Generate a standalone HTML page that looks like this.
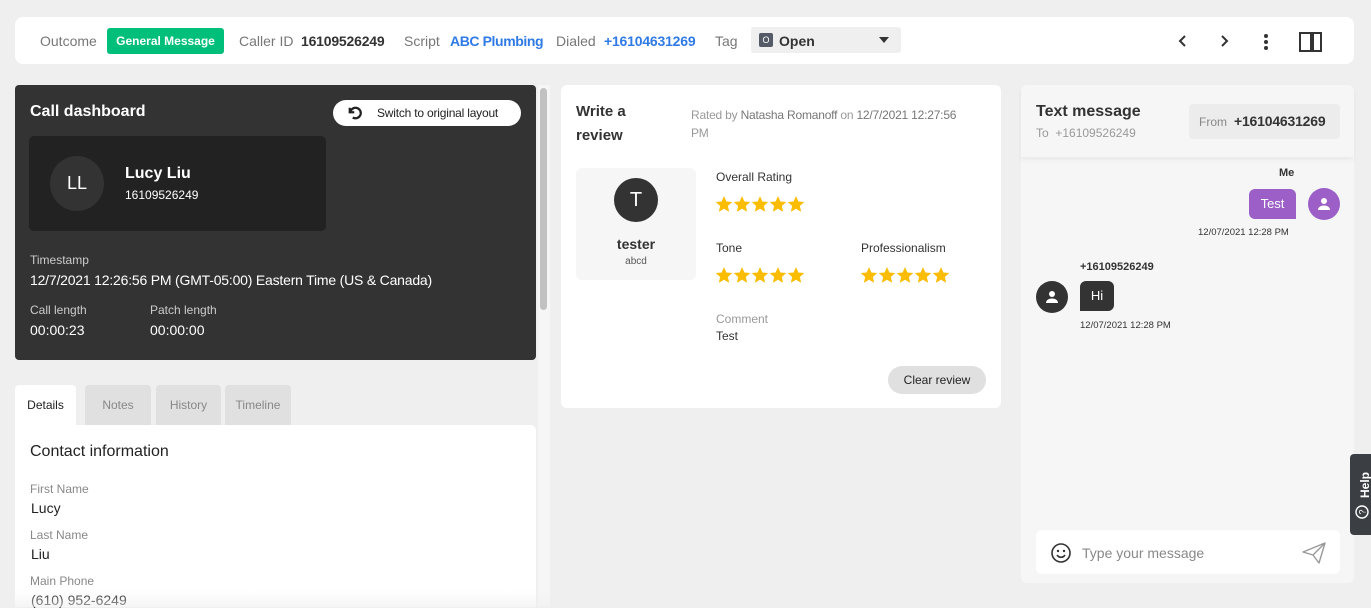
<!DOCTYPE html>
<html><head><meta charset="utf-8"><style>
*{box-sizing:border-box;margin:0;padding:0}
body{width:1371px;height:607px;background:#efefef;font-family:"Liberation Sans",sans-serif;position:relative;overflow:hidden;color:#333}
.a{position:absolute;white-space:nowrap}
.g{color:#777}
</style></head><body>
<!-- top bar -->
<div class="a" style="left:15px;top:17px;width:1339px;height:47px;background:#fff;border-radius:8px"></div>
<div class="a g" style="left:40px;top:33px;font-size:14px">Outcome</div>
<div class="a" style="left:107px;top:28px;width:117px;height:26px;background:#00bf7a;border-radius:3px;color:#fff;font-size:12px;font-weight:bold;text-align:center;line-height:26px">General Message</div>
<div class="a g" style="left:239px;top:33px;font-size:14px">Caller ID</div>
<div class="a" style="left:301px;top:33px;font-size:14px;font-weight:bold;letter-spacing:-0.2px">16109526249</div>
<div class="a g" style="left:404px;top:33px;font-size:14px">Script</div>
<div class="a" style="left:450px;top:33px;font-size:14px;font-weight:bold;color:#2f7ae5;letter-spacing:-0.4px">ABC Plumbing</div>
<div class="a g" style="left:556px;top:33px;font-size:14px">Dialed</div>
<div class="a" style="left:604px;top:33px;font-size:14px;font-weight:bold;color:#2f7ae5;letter-spacing:-0.2px">+16104631269</div>
<div class="a g" style="left:715px;top:33px;font-size:14px">Tag</div>
<div class="a" style="left:751px;top:27px;width:150px;height:26px;background:#efefef;border-radius:3px"></div>
<div class="a" style="left:759px;top:33px;width:14px;height:14px;background:#555b66;border-radius:2px;color:#fff;font-size:9px;text-align:center;line-height:14px">O</div>
<div class="a" style="left:779px;top:33px;font-size:14px;font-weight:bold">Open</div>
<div class="a" style="left:879px;top:37px;border-left:5px solid transparent;border-right:5px solid transparent;border-top:6px solid #333"></div>
<svg class="a" style="left:1176px;top:33px" width="14" height="16" viewBox="0 0 14 16"><path d="M9 3L4 8l5 5" fill="none" stroke="#333" stroke-width="2"/></svg>
<svg class="a" style="left:1217px;top:33px" width="14" height="16" viewBox="0 0 14 16"><path d="M5 3l5 5-5 5" fill="none" stroke="#333" stroke-width="2"/></svg>
<svg class="a" style="left:1262px;top:33px" width="8" height="18"><circle cx="4" cy="3" r="2" fill="#333"/><circle cx="4" cy="9" r="2" fill="#333"/><circle cx="4" cy="15" r="2" fill="#333"/></svg>
<svg class="a" style="left:1299px;top:32px" width="24" height="20"><rect x="1" y="1" width="11" height="18" fill="none" stroke="#333" stroke-width="2"/><rect x="14" y="1" width="8" height="18" fill="none" stroke="#333" stroke-width="2"/></svg>

<!-- dark card -->
<div class="a" style="left:15px;top:85px;width:521px;height:275px;background:#333;border-radius:4px"></div>
<div class="a" style="left:30px;top:103px;font-size:16px;color:#fff;font-weight:bold">Call dashboard</div>
<div class="a" style="left:333px;top:100px;width:188px;height:26px;background:#fff;border-radius:13px"></div>
<svg class="a" style="left:346px;top:104px" width="18" height="18" viewBox="0 0 24 24"><path d="M5 5v6h6" fill="none" stroke="#222" stroke-width="3"/><path d="M6 10a7 7 0 1 1 3 8" fill="none" stroke="#222" stroke-width="3"/></svg>
<div class="a" style="left:377px;top:106px;font-size:12px;color:#222;letter-spacing:-0.2px">Switch to original layout</div>
<div class="a" style="left:29px;top:136px;width:297px;height:95px;background:#222;border-radius:5px"></div>
<div class="a" style="left:50px;top:156px;width:54px;height:55px;background:#333;border-radius:50%;color:#fff;font-size:18px;text-align:center;line-height:55px">LL</div>
<div class="a" style="left:125px;top:165px;font-size:16px;color:#fff;font-weight:bold">Lucy Liu</div>
<div class="a" style="left:125px;top:188px;font-size:12px;color:#fff">16109526249</div>
<div class="a" style="left:30px;top:253px;font-size:12px;color:#ccc">Timestamp</div>
<div class="a" style="left:30px;top:272px;font-size:14px;color:#fff;letter-spacing:-0.2px">12/7/2021 12:26:56 PM (GMT-05:00) Eastern Time (US &amp; Canada)</div>
<div class="a" style="left:30px;top:303px;font-size:12px;color:#ccc">Call length</div>
<div class="a" style="left:30px;top:322px;font-size:14px;color:#fff">00:00:23</div>
<div class="a" style="left:150px;top:303px;font-size:12px;color:#ccc">Patch length</div>
<div class="a" style="left:150px;top:322px;font-size:14px;color:#fff">00:00:00</div>
<!-- scrollbar -->
<div class="a" style="left:538px;top:85px;width:12px;height:522px;background:#f6f6f6"></div>
<div class="a" style="left:540px;top:88px;width:7px;height:222px;background:#c1c1c1;border-radius:4px"></div>

<!-- tabs -->
<div class="a" style="left:15px;top:385px;width:61px;height:45px;background:#fff;border-radius:4px 4px 0 0;font-size:12px;text-align:center;line-height:40px;color:#222">Details</div>
<div class="a" style="left:85px;top:385px;width:66px;height:40px;background:#e0e0e0;border-radius:4px 4px 0 0;font-size:12px;text-align:center;line-height:40px;color:#888">Notes</div>
<div class="a" style="left:156px;top:385px;width:65px;height:40px;background:#e0e0e0;border-radius:4px 4px 0 0;font-size:12px;text-align:center;line-height:40px;color:#888">History</div>
<div class="a" style="left:225px;top:385px;width:66px;height:40px;background:#e0e0e0;border-radius:4px 4px 0 0;font-size:12px;text-align:center;line-height:40px;color:#888">Timeline</div>
<div class="a" style="left:15px;top:425px;width:521px;height:182px;background:#fff;border-radius:0 5px 0 0"></div>
<div class="a" style="left:30px;top:443px;font-size:16px;color:#222">Contact information</div>
<div class="a" style="left:30px;top:482px;font-size:12px;color:#888">First Name</div>
<div class="a" style="left:31px;top:500px;font-size:14px;color:#222">Lucy</div>
<div class="a" style="left:30px;top:528px;font-size:12px;color:#888">Last Name</div>
<div class="a" style="left:31px;top:546px;font-size:14px;color:#222">Liu</div>
<div class="a" style="left:30px;top:574px;font-size:12px;color:#888">Main Phone</div>
<div class="a" style="left:31px;top:592px;font-size:14px;color:#222">(610) 952-6249</div>
<div class="a" style="left:0;top:590px;width:1371px;height:17px;background:linear-gradient(rgba(239,239,239,0),rgba(239,239,239,.6))"></div>

<!-- review card -->
<div class="a" style="left:561px;top:85px;width:440px;height:323px;background:#fff;border-radius:6px"></div>
<div class="a" style="left:576px;top:100px;font-size:15px;line-height:24px;color:#333;font-weight:bold">Write a<br>review</div>
<div class="a" style="left:691px;top:106px;font-size:12px;line-height:18px;color:#999;letter-spacing:-0.2px">Rated by <span style="color:#777">Natasha Romanoff</span> on <span style="color:#777">12/7/2021 12:27:56</span><br>PM</div>
<div class="a" style="left:576px;top:168px;width:120px;height:112px;background:#f6f6f6;border-radius:6px"></div>
<div class="a" style="left:614px;top:178px;width:44px;height:44px;background:#333;border-radius:50%;color:#fff;font-size:20px;text-align:center;line-height:44px">T</div>
<div class="a" style="left:576px;top:236px;width:120px;text-align:center;font-size:14px;font-weight:bold">tester</div>
<div class="a" style="left:576px;top:256px;width:120px;text-align:center;font-size:10px;color:#555">abcd</div>
<div class="a" style="left:716px;top:170px;font-size:12px;color:#333">Overall Rating</div>
<div class="a" style="left:716px;top:241px;font-size:12px;color:#333">Tone</div>
<div class="a" style="left:861px;top:241px;font-size:12px;color:#333">Professionalism</div>
<svg width="0" height="0" style="position:absolute"><defs><symbol id="s" viewBox="0 0 24 24"><path d="M12 1.5l3.2 7.2 7.8.7-5.9 5.2 1.8 7.7L12 18.3l-6.9 4 1.8-7.7L1 9.4l7.8-.7z" fill="#fbbc04"/></symbol></defs></svg>
<div class="a" style="left:715px;top:195px"><svg width="90" height="18"><use href="#s" x="0" width="18" height="18"/><use href="#s" x="18" width="18" height="18"/><use href="#s" x="36" width="18" height="18"/><use href="#s" x="54" width="18" height="18"/><use href="#s" x="72" width="18" height="18"/></svg></div>
<div class="a" style="left:715px;top:266px"><svg width="90" height="18"><use href="#s" x="0" width="18" height="18"/><use href="#s" x="18" width="18" height="18"/><use href="#s" x="36" width="18" height="18"/><use href="#s" x="54" width="18" height="18"/><use href="#s" x="72" width="18" height="18"/></svg></div>
<div class="a" style="left:860px;top:266px"><svg width="90" height="18"><use href="#s" x="0" width="18" height="18"/><use href="#s" x="18" width="18" height="18"/><use href="#s" x="36" width="18" height="18"/><use href="#s" x="54" width="18" height="18"/><use href="#s" x="72" width="18" height="18"/></svg></div>
<div class="a" style="left:716px;top:312px;font-size:12px;color:#999">Comment</div>
<div class="a" style="left:716px;top:329px;font-size:12px;color:#333">Test</div>
<div class="a" style="left:888px;top:366px;width:98px;height:28px;background:#e0e0e0;border-radius:14px;font-size:12px;text-align:center;line-height:28px;color:#222">Clear review</div>

<!-- text message panel -->
<div class="a" style="left:1021px;top:85px;width:333px;height:498px;background:#f6f6f6;border-radius:6px"></div>
<div class="a" style="left:1021px;top:85px;width:333px;height:72px;background:#f6f6f6;border-radius:6px 6px 0 0;box-shadow:0 3px 5px rgba(0,0,0,.05)"></div>
<div class="a" style="left:1036px;top:103px;font-size:16px;color:#333;font-weight:bold">Text message</div>
<div class="a" style="left:1036px;top:126px;font-size:12px;color:#999">To&nbsp; +16109526249</div>
<div class="a" style="left:1189px;top:104px;width:151px;height:35px;background:#ececec;border-radius:4px"></div>
<div class="a" style="left:1199px;top:115px;font-size:12px;color:#888">From</div>
<div class="a" style="left:1234px;top:113px;font-size:14px;font-weight:bold;color:#333;letter-spacing:-0.2px">+16104631269</div>
<div class="a" style="left:1279px;top:167px;font-size:11px;font-weight:bold;color:#333">Me</div>
<div class="a" style="left:1249px;top:189px;width:47px;height:30px;background:#9b5fc7;border-radius:6px 6px 0 6px;color:#fff;font-size:13px;text-align:center;line-height:30px">Test</div>
<div class="a" style="left:1308px;top:188px;width:32px;height:32px;border-radius:50%;background:#9b5fc7"></div>
<svg class="a" style="left:1316px;top:196px" width="16" height="16" viewBox="0 0 16 16"><circle cx="8" cy="5" r="3" fill="#fff"/><path d="M2 14c0-3 3-4.5 6-4.5s6 1.5 6 4.5z" fill="#fff"/></svg>
<div class="a" style="left:1198px;top:227px;font-size:9.5px;color:#333">12/07/2021 12:28 PM</div>
<div class="a" style="left:1080px;top:261px;font-size:11px;font-weight:bold;color:#333">+16109526249</div>
<div class="a" style="left:1036px;top:281px;width:32px;height:32px;border-radius:50%;background:#333"></div>
<svg class="a" style="left:1044px;top:289px" width="16" height="16" viewBox="0 0 16 16"><circle cx="8" cy="5" r="3" fill="#fff"/><path d="M2 14c0-3 3-4.5 6-4.5s6 1.5 6 4.5z" fill="#fff"/></svg>
<div class="a" style="left:1080px;top:281px;width:34px;height:30px;background:#333;border-radius:6px 6px 6px 0;color:#fff;font-size:13px;text-align:center;line-height:30px">Hi</div>
<div class="a" style="left:1080px;top:320px;font-size:9.5px;color:#333">12/07/2021 12:28 PM</div>
<div class="a" style="left:1036px;top:530px;width:304px;height:44px;background:#fff;border-radius:6px"></div>
<svg class="a" style="left:1050px;top:542px" width="22" height="22" viewBox="0 0 22 22"><circle cx="11" cy="11" r="9" fill="none" stroke="#333" stroke-width="1.6"/><circle cx="8" cy="9" r="1.2" fill="#333"/><circle cx="14" cy="9" r="1.2" fill="#333"/><path d="M7 13c2 3 6 3 8 0" fill="none" stroke="#333" stroke-width="1.6"/></svg>
<div class="a" style="left:1082px;top:545px;font-size:14px;color:#888">Type your message</div>
<svg class="a" style="left:1302px;top:542px" width="24" height="22" viewBox="0 0 24 22"><path d="M1 10L23 1 17 21 11 13z M11 13L23 1" fill="none" stroke="#999" stroke-width="1.4" stroke-linejoin="round"/></svg>
<!-- help -->
<div class="a" style="left:1350px;top:454px;width:21px;height:81px;background:#3b3f43;border-radius:4px 0 0 4px"></div>
<div class="a" style="left:1352px;top:478px;font-size:12px;color:#fff;font-weight:bold;transform:rotate(-90deg);transform-origin:center">Help</div>
<svg class="a" style="left:1355px;top:505px" width="14" height="14"><circle cx="7" cy="7" r="6" fill="none" stroke="#fff" stroke-width="1.4"/><text x="7" y="10.5" font-size="9" fill="#fff" text-anchor="middle" transform="rotate(-90 7 7)">?</text></svg>
</body></html>
